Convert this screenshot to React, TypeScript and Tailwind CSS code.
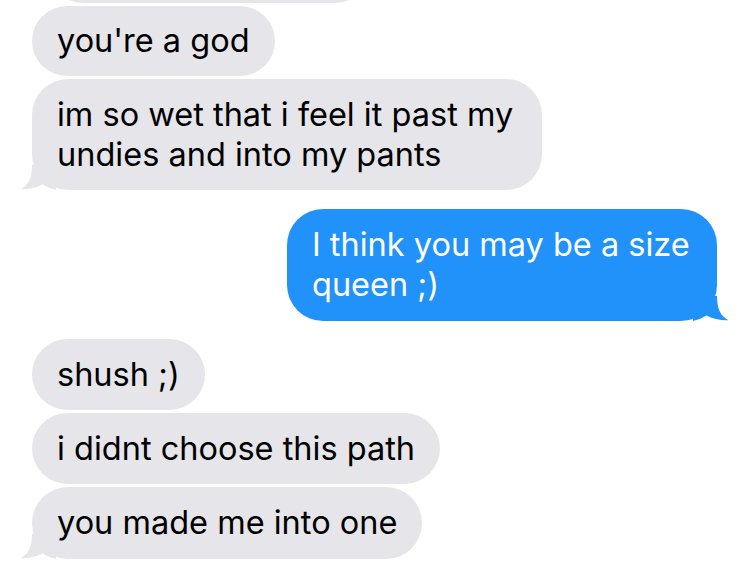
import React from 'react'

function TailLeft() {
  return (
    <svg className="absolute left-[-12px] bottom-0" width="36" height="25" viewBox="0 0 36 25">
      <path d="M12 0 C12 13 8.5 20 0.5 24.3 Q13 24.6 22.5 19.5 Q29 23.5 36 25 L36 0 Z" fill="#e5e5ea" />
    </svg>
  )
}

function TailRight() {
  return (
    <svg className="absolute right-[-12px] bottom-0" width="36" height="25" viewBox="0 0 36 25">
      <path d="M24 0 C24 13 27.5 20 35.5 24.3 Q23 24.6 13.5 19.5 Q7 23.5 0 25 L0 0 Z" fill="#2092f9" />
    </svg>
  )
}

function Received({ text, tail, className }: { text: React.ReactNode; tail?: boolean; className?: string }) {
  return (
    <div className={`relative self-start bg-[#e5e5ea] text-black rounded-[36px] px-[25px] text-[32.5px] leading-[40px] ${className ?? 'py-[15.5px]'}`}>
      {tail && <TailLeft />}
      <span className="relative">{text}</span>
    </div>
  )
}

export default function App() {
  return (
    <div className="w-[750px] h-[573px] overflow-hidden bg-white font-['Inter','Liberation_Sans',sans-serif]">
      <div className="flex flex-col pl-[32px] pr-[33px]">
        <div className="self-start ml-[16px] w-[322px] h-[70px] mt-[-67px] rounded-[36px] bg-[#e5e5ea]" />
        <div className="h-[3px]" />
        <Received text="you're a god" className="py-[15px]" />
        <div className="h-[3px]" />
        <Received
          tail
          className="w-[510px] py-[15.5px]"
          text={<>im so wet that i feel it past my<br />undies and into my pants</>}
        />
        <div className="h-[19px]" />
        <div className="relative self-end w-[430px] bg-[#2092f9] text-white rounded-[36px] px-[25px] py-[16px] text-[32.5px] leading-[40px]">
          <TailRight />
          <span className="relative">I think you may be a size<br />queen ;)</span>
        </div>
        <div className="h-[18px]" />
        <Received text="shush ;)" />
        <div className="h-[3px]" />
        <Received text="i didnt choose this path" />
        <div className="h-[3px]" />
        <Received tail text="you made me into one" className="py-[16px]" />
      </div>
    </div>
  )
}
